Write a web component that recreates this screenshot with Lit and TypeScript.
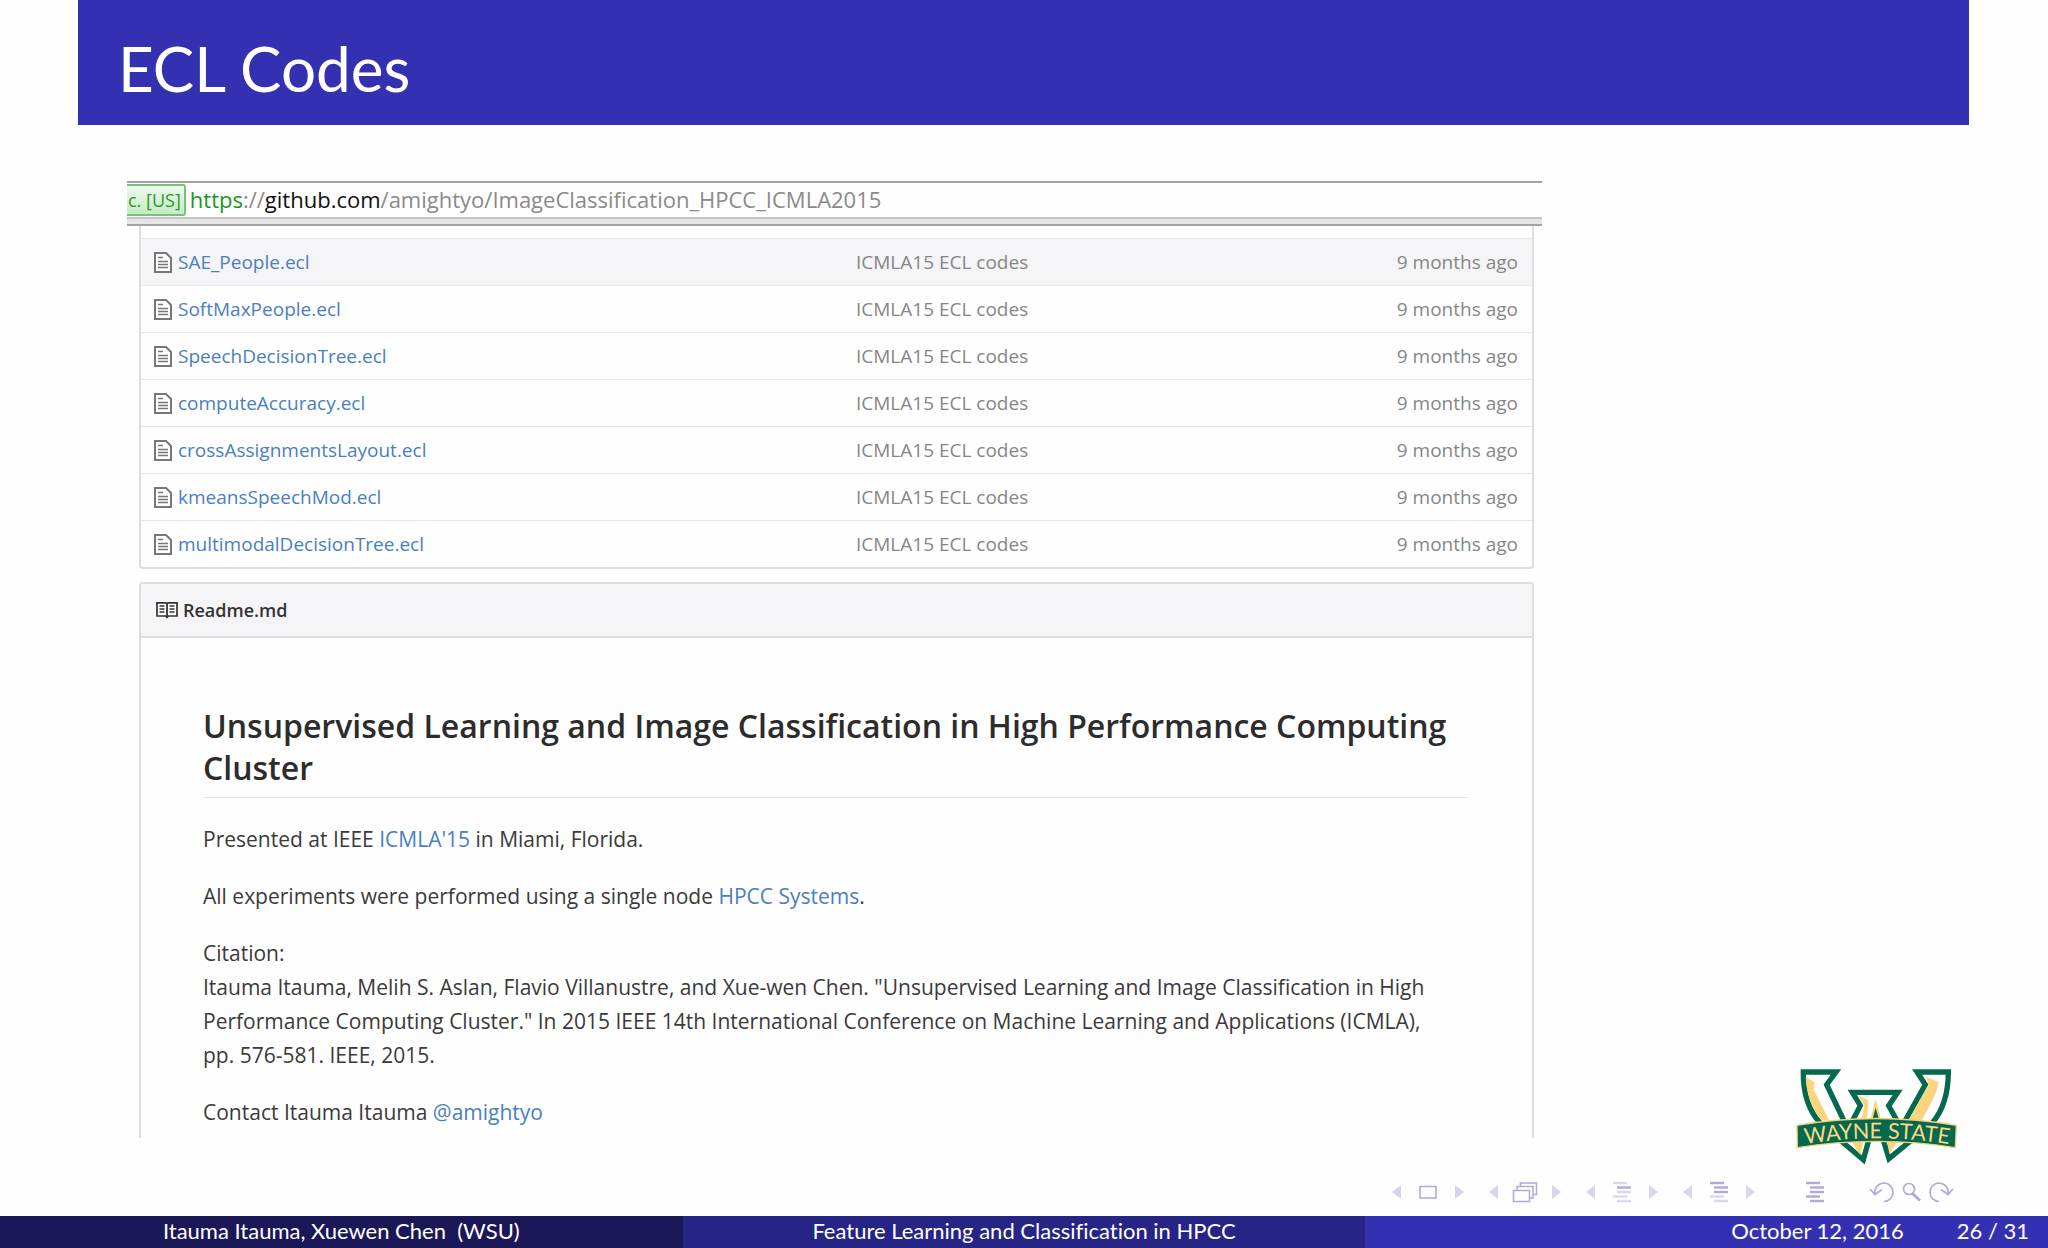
import { LitElement, html, svg, css } from "lit";
import { customElement } from "lit/decorators.js";

const FILES = [
  "SAE_People.ecl",
  "SoftMaxPeople.ecl",
  "SpeechDecisionTree.ecl",
  "computeAccuracy.ecl",
  "crossAssignmentsLayout.ecl",
  "kmeansSpeechMod.ecl",
  "multimodalDecisionTree.ecl",
];

const fileIcon = html`<svg class="file-icon" width="18" height="21" viewBox="0 0 18 21" aria-hidden="true">
  <path d="M1 1h11l5 5v14H1z" fill="#fff" stroke="#777" stroke-width="2" />
  <path d="M4 5.5h5M4 9.5h10M4 12.5h10M4 15.5h10" stroke="#777" stroke-width="1.4" />
</svg>`;

const bookIcon = html`<svg width="22" height="18" viewBox="0 0 22 18" aria-hidden="true">
  <path d="M1 1.8h8.6L11 2.6l1.4-.8H21V15h-8.6L11 16.3 9.6 15H1z" fill="#fff" stroke="#333" stroke-width="1.7" />
  <path d="M11 2v15" stroke="#333" stroke-width="1.8" />
  <path d="M3.5 5h5M3.5 8h5M3.5 11h5M13.5 5h5M13.5 8h5M13.5 11h5" stroke="#333" stroke-width="1.6" />
</svg>`;

/** Five stacked strokes; the flags tell which ones are drawn in the stronger tint. */
const outline = (strong: boolean[]) => html`<svg width="24" height="22" viewBox="0 0 24 22" aria-hidden="true">
  ${strong.map(
    (on, i) => svg`<path d="M${[3, 7, 7, 3, 7][i]} ${2 + i * 4.5}h14"
      stroke=${on ? "#b0aadc" : "#dad8ee"} stroke-width="2.4" />`,
  )}
</svg>`;

const frameIcon = html`<svg width="24" height="22" viewBox="0 0 24 22" aria-hidden="true">
  <path d="M4 5.5h16v11.5H4z" fill="none" stroke="#b0aadc" stroke-width="1.6" />
</svg>`;

const framesIcon = html`<svg width="26" height="22" viewBox="0 0 26 22" aria-hidden="true">
  <g fill="#fefefe" stroke="#b0aadc" stroke-width="1.5">
    <path d="M8.5 2h16v11.5h-16z" /><path d="M5 5.5h16V17H5z" /><path d="M1.5 9.5h16V20.5h-16z" />
  </g>
</svg>`;

const arrow = (dir: "left" | "right") => html`<svg width="9" height="14" viewBox="0 0 9 14" aria-hidden="true">
  <path d=${dir === "left" ? "M9 0v14L0 7z" : "M0 0v14l9-7z"} fill="#d8d5ec" />
</svg>`;

@customElement("wayne-logo")
class WayneLogo extends LitElement {
  static styles = css`
    :host { display: block; }
    .mark { display: block; }
    .name { font: 400 65px "Lato", "Liberation Sans", sans-serif; fill: #fbd883; }
  `;
  render() {
    return html`<svg class="mark" width="163" height="100" viewBox="45 50 489 300" role="img" aria-label="Wayne State">
      <path fill="#fff" stroke="#04694f" stroke-width="16" stroke-miterlimit="6"
        d="M70 65H168L140 103 200 228 212 222 241 166 217 126H353L326 166 357 222 366 228 436 103 411 65H505C505 130 490 180 455 220L327 325 287 195 250 328 122 220C85 180 69 130 70 65Z" />
      <g fill="#fbd57c">
        <path d="M77 80L104 96 101 118 148 210H125C95 175 80 130 77 80Z" />
        <path d="M440 80L476 95Q472 130 425 210H385L446 105Z" />
        <path d="M236 136L265 150 261 210H243L253 166Z" />
        <path d="M287 146L304 210H270Z" />
        <path d="M216 272H250L242 314 232 302Z" />
        <path d="M322 272H352L328 312Z" />
      </g>
      <path fill="#04694f" d="M287 172L299 215H275Z" />
      <path fill="#04694f" stroke="#f3cf78" stroke-width="4"
        d="M51 225Q290 184 529 225L526 292Q290 254 52 292Z" />
      <path id="arc" fill="none" d="M60 284Q290 244 522 284" />
      <text class="name"><textPath href="#arc" startOffset="50%" text-anchor="middle">WAYNE STATE</textPath></text>
    </svg>`;
  }
}

@customElement("slide-nav")
class SlideNav extends LitElement {
  static styles = css`
    :host { display: block; }
    .bar { display: flex; justify-content: flex-end; align-items: center; height: 49px; padding-right: 94px; }
    .group { display: flex; align-items: center; justify-content: space-between; width: 72px; margin-right: 25px; }
    .doc { margin: 0 42px 0 23px; }
    .history { display: flex; gap: 7px; }
    button { display: block; padding: 0; border: 0; background: none; line-height: 0; }
  `;
  private group(label: string, icon: unknown) {
    return html`<div class="group">
      <button aria-label="Previous ${label}">${arrow("left")}</button>
      <button aria-label="Go to ${label}">${icon}</button>
      <button aria-label="Next ${label}">${arrow("right")}</button>
    </div>`;
  }
  render() {
    return html`<nav class="bar" aria-label="Slides">
      ${this.group("slide", frameIcon)} ${this.group("frame", framesIcon)}
      ${this.group("subsection", outline([false, true, false, false, false]))}
      ${this.group("section", outline([true, true, true, false, false]))}
      <button class="doc" aria-label="Document">${outline([true, true, true, true, true])}</button>
      <div class="history">
        <button aria-label="Back">
          <svg width="26" height="22" viewBox="0 0 26 22" aria-hidden="true">
            <path d="M6 13C5 6 10 2 16 2a9.3 9.3 0 0 1-1 18.5M1 8l5 5.5L13 8.5" fill="none" stroke="#b0aadc" stroke-width="1.7" />
          </svg>
        </button>
        <button aria-label="Search">
          <svg width="19" height="22" viewBox="0 0 19 22" aria-hidden="true">
            <circle cx="7" cy="8" r="5.5" fill="none" stroke="#b0aadc" stroke-width="1.7" />
            <path d="M10.5 12.5l7.5 7" stroke="#b0aadc" stroke-width="3" />
          </svg>
        </button>
        <button aria-label="Forward">
          <svg width="26" height="22" viewBox="0 0 26 22" aria-hidden="true">
            <path d="M20 13C21 6 16 2 10 2a9.3 9.3 0 0 0 1 18.5M25 8l-5 5.5L13 8.5" fill="none" stroke="#b0aadc" stroke-width="1.7" />
          </svg>
        </button>
      </div>
    </nav>`;
  }
}

@customElement("repo-view")
class RepoView extends LitElement {
  static styles = css`
    :host { display: block; font-family: "Open Sans", "Noto Sans", sans-serif; }
    a { color: #4a7fc1; text-decoration: none; }
    .address {
      display: flex; align-items: center; gap: 4px; height: 34px;
      border-top: 2px solid #a3a3a3; border-bottom: 2px solid #c6c5c6;
      font-size: 22px; line-height: 28px;
    }
    .badge {
      padding: 0 3px 0 1px; border: 2px solid #7dbd7d; border-left: 0; border-radius: 0 3px 3px 0;
      background: linear-gradient(#ecfaec, #c4ecc4); color: #2c962c; font-size: 18px;
    }
    .url { padding-bottom: 2px; color: #8a8a8a; }
    .scheme { color: #1c961c; }
    .host { color: #111; }
    .edge { height: 5px; background: #e6e5e6; border-bottom: 2px solid #a3a2a4; }
    .page { margin: 0 8px 0 12px; }
    .files { padding-top: 12px; border: 2px solid #dddcde; border-top: 0; border-radius: 0 0 4px 4px; }
    table { width: 100%; border-collapse: collapse; table-layout: fixed; font-size: 19px; line-height: 24px; color: #868686; }
    td { height: 46px; padding: 0; border-top: 1px solid #e6e6ea; }
    tr:first-child td { background: #f5f4f6; }
    .name { width: 715px; }
    .age { width: 200px; padding-right: 14px; text-align: right; }
    .file { display: flex; align-items: center; gap: 6px; padding-left: 13px; }
    .readme { margin-top: 13px; border: 2px solid #dddcde; border-bottom: 0; border-radius: 4px 4px 0 0; }
    .caption {
      display: flex; align-items: center; gap: 5px; height: 52px; margin: 0; padding-left: 15px;
      border-bottom: 2px solid #dddcde; background: #f5f4f6; color: #333;
      font-size: 18px; font-weight: 600; line-height: 24px;
    }
    .body { padding: 67px 64px 1px 62px; color: #3a3a3a; font-size: 21px; line-height: 34px; }
    h1 { margin: 0 0 24px; padding-bottom: 8px; border-bottom: 1px solid #e6e6e6; color: #2c2c2c; font-size: 32px; font-weight: 600; line-height: 42px; }
    p { margin: 0 0 23px; }
    p:last-child { margin-bottom: 8px; }
    .pages { white-space: nowrap; }
  `;
  render() {
    return html`
      <div class="address">
        <span class="badge">c. [US]</span>
        <a class="url" href="#"><span class="scheme">https</span>://<span class="host">github.com</span>/amightyo/ImageClassification_HPCC_ICMLA2015</a>
      </div>
      <div class="edge"></div>
      <div class="page">
        <div class="files">
          <table>
            <tbody>
              ${FILES.map(
                (f) => html`<tr>
                  <td class="name"><span class="file">${fileIcon}<a href="#">${f}</a></span></td>
                  <td>ICMLA15 ECL codes</td>
                  <td class="age">9 months ago</td>
                </tr>`,
              )}
            </tbody>
          </table>
        </div>
        <article class="readme">
          <h2 class="caption">${bookIcon}Readme.md</h2>
          <div class="body">
            <h1>Unsupervised Learning and Image Classification in High Performance Computing Cluster</h1>
            <p>Presented at IEEE <a href="#">ICMLA'15</a> in Miami, Florida.</p>
            <p>All experiments were performed using a single node <a href="#">HPCC Systems</a>.</p>
            <p>Citation:<br />Itauma Itauma, Melih S. Aslan, Flavio Villanustre, and Xue-wen Chen. "Unsupervised Learning and Image Classification in High Performance Computing Cluster." In 2015 IEEE 14th International Conference on Machine Learning and Applications (ICMLA), <span class="pages">pp. 576-581.</span> IEEE, 2015.</p>
            <p>Contact Itauma Itauma <a href="#">@amightyo</a></p>
          </div>
        </article>
      </div>
    `;
  }
}

@customElement("app-root")
class AppRoot extends LitElement {
  static styles = css`
    :host { display: flex; flex-direction: column; min-height: 100vh; background: #fefefe; font-family: "Lato", "Liberation Sans", sans-serif; font-variant-ligatures: none; }
    .title { margin: 0 79px 0 78px; padding: 30px 40px 19px; background: #3331b1; color: #fff; font-size: 62px; font-weight: 400; line-height: 76px; }
    .content { display: flex; flex: 1; align-items: flex-start; justify-content: space-between; padding: 56px 90px 0 127px; }
    .shot { flex: 1; max-width: 1415px; }
    .logo { align-self: flex-end; }
    .foot { display: grid; grid-template-columns: repeat(3, 1fr); height: 32px; color: #fff; font-size: 22px; line-height: 30px; text-align: center; white-space: pre; }
    .authors { background: #1a1857; }
    .talk { background: #262485; }
    .date { display: flex; justify-content: flex-end; gap: 53px; padding-right: 19px; background: #3331b1; }
  `;
  render() {
    return html`
      <h1 class="title">ECL Codes</h1>
      <main class="content">
        <repo-view class="shot"></repo-view>
        <wayne-logo class="logo"></wayne-logo>
      </main>
      <slide-nav></slide-nav>
      <footer class="foot">
        <span class="authors">Itauma Itauma, Xuewen Chen  (WSU)</span>
        <span class="talk">Feature Learning and Classification in HPCC</span>
        <span class="date"><span>October 12, 2016</span><span>26 / 31</span></span>
      </footer>
    `;
  }
}
